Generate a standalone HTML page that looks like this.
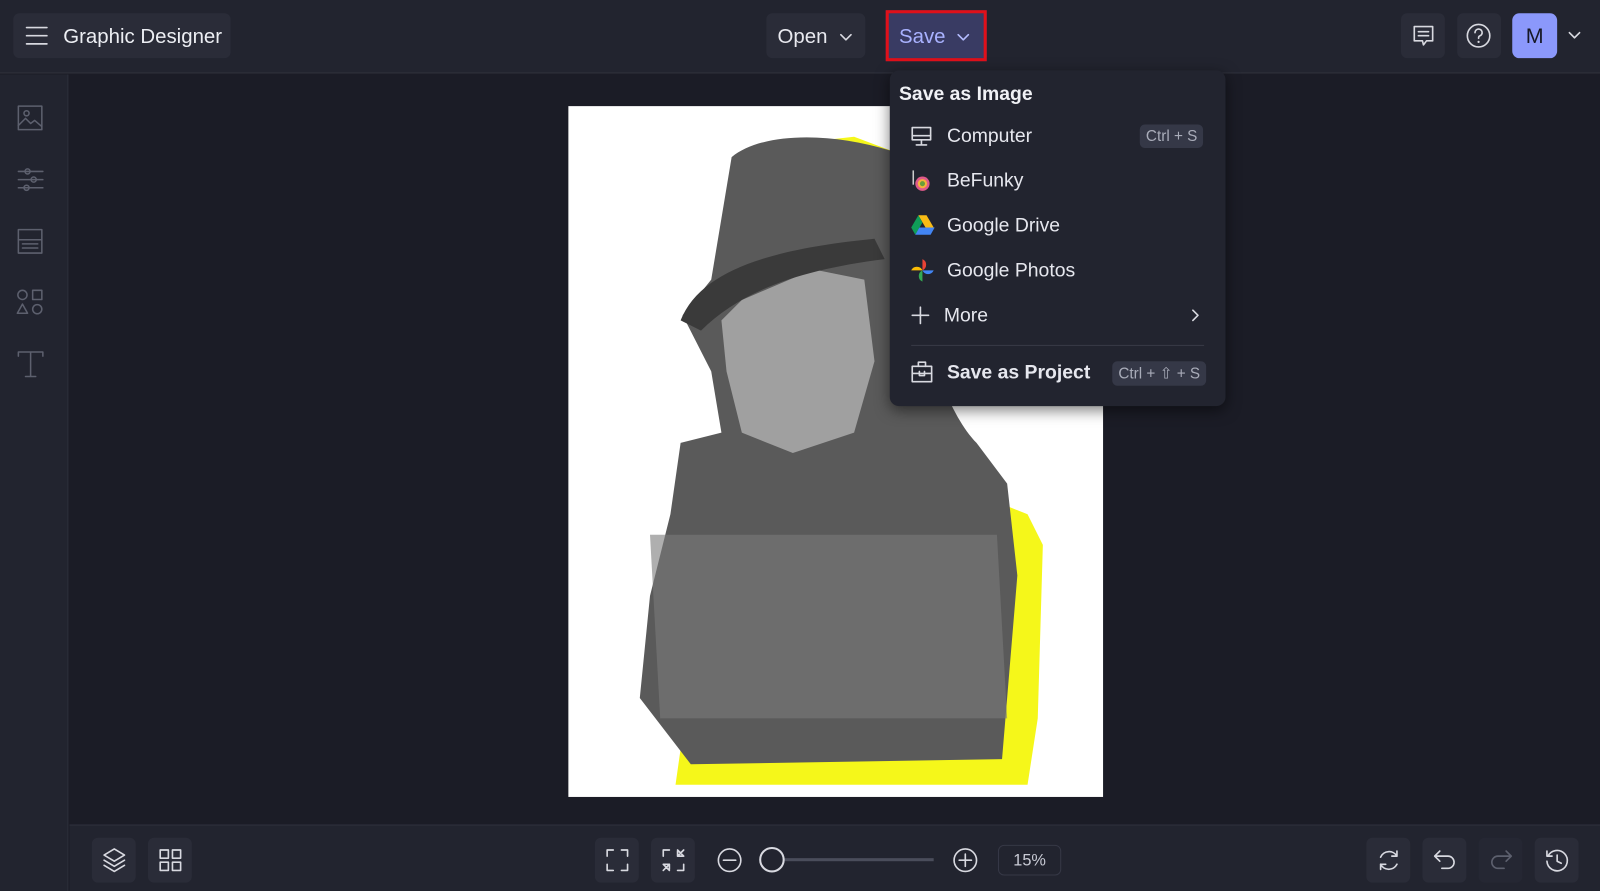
<!DOCTYPE html>
<html><head><meta charset="utf-8"><style>
*{box-sizing:border-box;margin:0;padding:0}
html,body{width:1600px;height:891px;overflow:hidden;background:#1b1c26;font-family:"Liberation Sans",sans-serif;color:#e8e9ef}
#w{position:absolute;left:0;top:0;width:1568px;height:873px;transform:scale(1.020408);transform-origin:0 0;background:#1b1c26}
.a{position:absolute}
.btn{position:absolute;background:#2a2c38;border-radius:6px}
svg{position:absolute;overflow:visible}
.ic{fill:none;stroke:#d8d9e0;stroke-width:1.6;stroke-linecap:round;stroke-linejoin:round}
.sic{fill:none;stroke:#5d606e;stroke-width:1.5;stroke-linecap:round;stroke-linejoin:round}
.mi{position:absolute;left:928px;font-size:19px;color:#e6e7ee}
.kb{position:absolute;background:#353847;border-radius:5px;color:#a9acb9;font-size:15px;padding:3px 6px}
</style></head><body><div id="w">
<div class="a" style="left:0;top:0;width:1568px;height:72px;background:#22242f;border-bottom:1px solid #30323d"></div>
<div class="btn" style="left:13px;top:13px;width:213px;height:44px"></div>
<svg style="left:24px;top:25px" width="24" height="20"><path class="ic" d="M2 2h20M2 10h20M2 18h20" stroke-width="2"/></svg>
<div class="a" style="left:62px;top:25px;font-size:20px;color:#eceef3">Graphic Designer</div>
<div class="btn" style="left:751px;top:13px;width:97px;height:44px"></div>
<div class="a" style="left:762px;top:25px;font-size:20px">Open</div>
<svg style="left:823px;top:33px" width="12" height="8"><path class="ic" d="M1 1l5 5 5-5"/></svg>
<div class="a" style="left:868px;top:10px;width:99px;height:50px;border:3px solid #e0101a;background:#393b63"></div>
<div class="a" style="left:881px;top:25px;font-size:20px;color:#a9b2ff">Save</div>
<svg style="left:938px;top:33px" width="12" height="8"><path class="ic" d="M1 1l5 5 5-5" style="stroke:#b4bcff"/></svg>
<div class="btn" style="left:1373px;top:13px;width:43px;height:44px"></div>
<svg style="left:1384px;top:24px" width="22" height="22"><path class="ic" d="M2 2h18v14h-6l-3 4-1-4H2z M6 7h10M6 11h10" stroke-width="1.8"/></svg>
<div class="btn" style="left:1428px;top:13px;width:43px;height:44px"></div>
<svg style="left:1437px;top:23px" width="24" height="24"><circle class="ic" cx="12" cy="12" r="11" stroke-width="1.8"/><path class="ic" d="M8.5 9a3.5 3.5 0 1 1 4.5 3.3c-1 .4-1 1-1 2.2" stroke-width="1.8"/><circle cx="12" cy="18" r="1.1" fill="#d8d9e0"/></svg>
<div class="a" style="left:1482px;top:13px;width:44px;height:44px;background:#8b98fb;border-radius:7px;color:#161826;font-size:21px;text-align:center;line-height:46px">M</div>
<svg style="left:1537px;top:31px" width="12" height="8"><path class="ic" d="M1 1l5 5 5-5"/></svg>
<div class="a" style="left:0;top:73px;width:67px;height:800px;background:#22242f;border-right:1px solid #2d2f3a"></div>
<svg style="left:17px;top:103px" width="26" height="26"><rect class="sic" x="1" y="1" width="23" height="23"/><circle class="sic" cx="9" cy="8" r="2.5"/><path class="sic" d="M1 20l7-7 5 5 4-3 7 6"/></svg>
<svg style="left:17px;top:163px" width="26" height="26"><path class="sic" d="M1 5h24M1 13h24M1 21h24"/><circle class="sic" cx="10" cy="5" r="2.5" fill="#22242f"/><circle class="sic" cx="16" cy="13" r="2.5" fill="#22242f"/><circle class="sic" cx="9" cy="21" r="2.5" fill="#22242f"/></svg>
<svg style="left:17px;top:224px" width="26" height="26"><rect class="sic" x="1" y="1" width="23" height="23"/><path class="sic" d="M1 11h23M5 15h15M5 19h15"/></svg>
<svg style="left:16px;top:283px" width="28" height="28"><circle class="sic" cx="6" cy="6" r="4.5"/><rect class="sic" x="16" y="1.5" width="9" height="9"/><path class="sic" d="M6 15l5 9H1z"/><circle class="sic" cx="20.5" cy="20" r="4.5"/></svg>
<svg style="left:17px;top:344px" width="26" height="26"><path class="sic" d="M1 1h24M13 1v24M8 25h10M1 1v4M25 1v4"/></svg>
<div class="a" style="left:557px;top:104px;width:524px;height:677px;background:#fff"></div>
<svg style="left:557px;top:104px" width="524" height="677">
<path d="M235 35 L280 30 L320 45 L350 60 L350 280 L380 330 L400 380 L450 400 L465 430 L460 600 L450 665 L105 665 L110 630 L165 620 Z" fill="#f5f71a"/>
<path d="M160 50 C190 25 260 25 320 45 L330 150 C345 220 370 300 400 330 L430 370 L440 460 L425 640 L120 645 L70 580 L80 480 L100 400 L110 330 L150 320 L140 260 L112 205 L140 170 L150 110 Z" fill="#5a5a5a"/>
<path d="M150 210 L170 190 L240 160 L290 170 L300 250 L280 320 L220 340 L170 320 L155 260 Z" fill="#a0a0a0"/>
<path d="M110 210 C130 160 200 140 300 130 L310 150 C230 160 170 180 130 220 Z" fill="#3a3a3a"/>
<path d="M80 420 L420 420 L430 600 L90 600 Z" fill="#7a7a7a" opacity=".6"/>
</svg>
<div class="a" style="left:872px;top:69px;width:329px;height:329px;background:#22242f;border-radius:9px;box-shadow:0 4px 14px rgba(0,0,0,.5)"></div>
<div class="a" style="left:881px;top:82px;font-size:19px;font-weight:bold;color:#f0f1f5">Save as Image</div>
<svg style="left:893px;top:124px" width="22" height="20"><rect class="ic" x="1" y="1" width="18" height="12"/><path class="ic" d="M1 9h18M10 13v4M5 18h10"/></svg>
<div class="mi" style="top:123px">Computer</div>
<div class="kb" style="left:1117px;top:122px">Ctrl + S</div>
<svg style="left:893px;top:166px" width="22" height="24"><path d="M2 1v14" stroke="#ccc" stroke-width="1.5"/><circle cx="11" cy="14" r="7" fill="#e05a8a"/><circle cx="11" cy="14" r="4.5" fill="#f6b23a"/><circle cx="11" cy="14" r="2.5" fill="#6a9f3a"/></svg>
<div class="mi" style="top:167px">BeFunky</div>
<svg style="left:892px;top:210px" width="24" height="22"><path d="M8 1h8l7 12h-8z" fill="#f9bc15"/><path d="M8 1l-7 12 4 7 7-12z" fill="#0f9d58"/><path d="M5 20h15l4-7H9z" fill="#4285f4"/></svg>
<div class="mi" style="top:211px">Google Drive</div>
<svg style="left:892px;top:253px" width="24" height="24"><path d="M12 12V1a6 6 0 0 1 0 11z" fill="#ea4335"/><path d="M12 12h11a6 6 0 0 1-11 0z" fill="#4285f4"/><path d="M12 12v11a6 6 0 0 1 0-11z" fill="#34a853"/><path d="M12 12H1a6 6 0 0 1 11 0z" fill="#fbbc05"/></svg>
<div class="mi" style="top:255px">Google Photos</div>
<svg style="left:893px;top:300px" width="18" height="18"><path class="ic" d="M9 1v16M1 9h16"/></svg>
<div class="mi" style="top:299px;left:925px">More</div>
<svg style="left:1168px;top:303px" width="8" height="12"><path class="ic" d="M1 1l5 5-5 5"/></svg>
<div class="a" style="left:893px;top:338px;width:287px;height:1px;background:#393b47"></div>
<svg style="left:893px;top:354px" width="22" height="22"><rect class="ic" x="1" y="5" width="19" height="15"/><path class="ic" d="M7 5V1h7v4M1 12h19M8 10v4h5v-4"/></svg>
<div class="mi" style="top:355px;font-weight:bold">Save as Project</div>
<div class="kb" style="left:1090px;top:354px">Ctrl + ⇧ + S</div>
<div class="a" style="left:68px;top:808px;width:1500px;height:65px;background:#22242f;border-top:1px solid #30323d"></div>
<div class="btn" style="left:90px;top:821px;width:43px;height:44px"></div>
<svg style="left:100px;top:831px" width="24" height="24"><path class="ic" d="M12 1l10 6-10 6-10-6z M2 12l10 6 10-6 M2 17l10 6 10-6"/></svg>
<div class="btn" style="left:145px;top:821px;width:43px;height:44px"></div>
<svg style="left:156px;top:832px" width="22" height="22"><rect class="ic" x="1" y="1" width="8" height="8"/><rect class="ic" x="13" y="1" width="8" height="8"/><rect class="ic" x="1" y="13" width="8" height="8"/><rect class="ic" x="13" y="13" width="8" height="8"/></svg>
<div class="btn" style="left:583px;top:821px;width:43px;height:44px"></div>
<svg style="left:594px;top:832px" width="22" height="22"><path class="ic" d="M1 7V1h6M15 1h6v6M21 15v6h-6M7 21H1v-6"/></svg>
<div class="btn" style="left:638px;top:821px;width:43px;height:44px"></div>
<svg style="left:649px;top:832px" width="22" height="22"><path class="ic" d="M1 7V1h6M15 1l6 6M21 1l-6 6v-5M15 7h5M1 15l6 6M1 21l6-6v5M7 15H2M21 15v6h-6"/></svg>
<svg style="left:703px;top:831px" width="24" height="24"><circle class="ic" cx="12" cy="12" r="11" stroke-width="1.8"/><path class="ic" d="M6 12h12" stroke-width="2"/></svg>
<div class="a" style="left:765px;top:841px;width:150px;height:3px;background:#4a4d5b"></div>
<div class="a" style="left:744px;top:830px;width:25px;height:25px;border-radius:50%;border:2px solid #d8d9e0;background:#22242f"></div>
<svg style="left:934px;top:831px" width="24" height="24"><circle class="ic" cx="12" cy="12" r="11" stroke-width="1.8"/><path class="ic" d="M6 12h12M12 6v12" stroke-width="2"/></svg>
<div class="a" style="left:978px;top:828px;width:62px;height:30px;border:1px solid #363846;border-radius:6px;text-align:center;line-height:30px;font-size:16px;color:#c8cad4">15%</div>
<div class="btn" style="left:1339px;top:821px;width:43px;height:44px"></div>
<svg style="left:1350px;top:832px" width="22" height="22"><path class="ic" d="M19 7A9 9 0 0 0 3 8M3 15a9 9 0 0 0 16 0M19 2v5h-5M3 20v-5h5"/></svg>
<div class="btn" style="left:1394px;top:821px;width:43px;height:44px"></div>
<svg style="left:1405px;top:832px" width="22" height="22"><path class="ic" d="M6 2L1 7l5 5M1 7h13a6 6 0 0 1 0 12H8"/></svg>
<div class="btn" style="left:1449px;top:821px;width:43px;height:44px;background:#252733"></div>
<svg style="left:1460px;top:832px" width="22" height="22"><path class="ic" style="stroke:#5d606e" d="M16 2l5 5-5 5M21 7H8a6 6 0 0 0 0 12h6"/></svg>
<div class="btn" style="left:1504px;top:821px;width:43px;height:44px"></div>
<svg style="left:1514px;top:831px" width="24" height="24"><path class="ic" d="M3 8a10 10 0 1 1-1 5M2 3v5h5M12 7v6l4 2" stroke-width="1.8"/></svg>
</div></body></html>
